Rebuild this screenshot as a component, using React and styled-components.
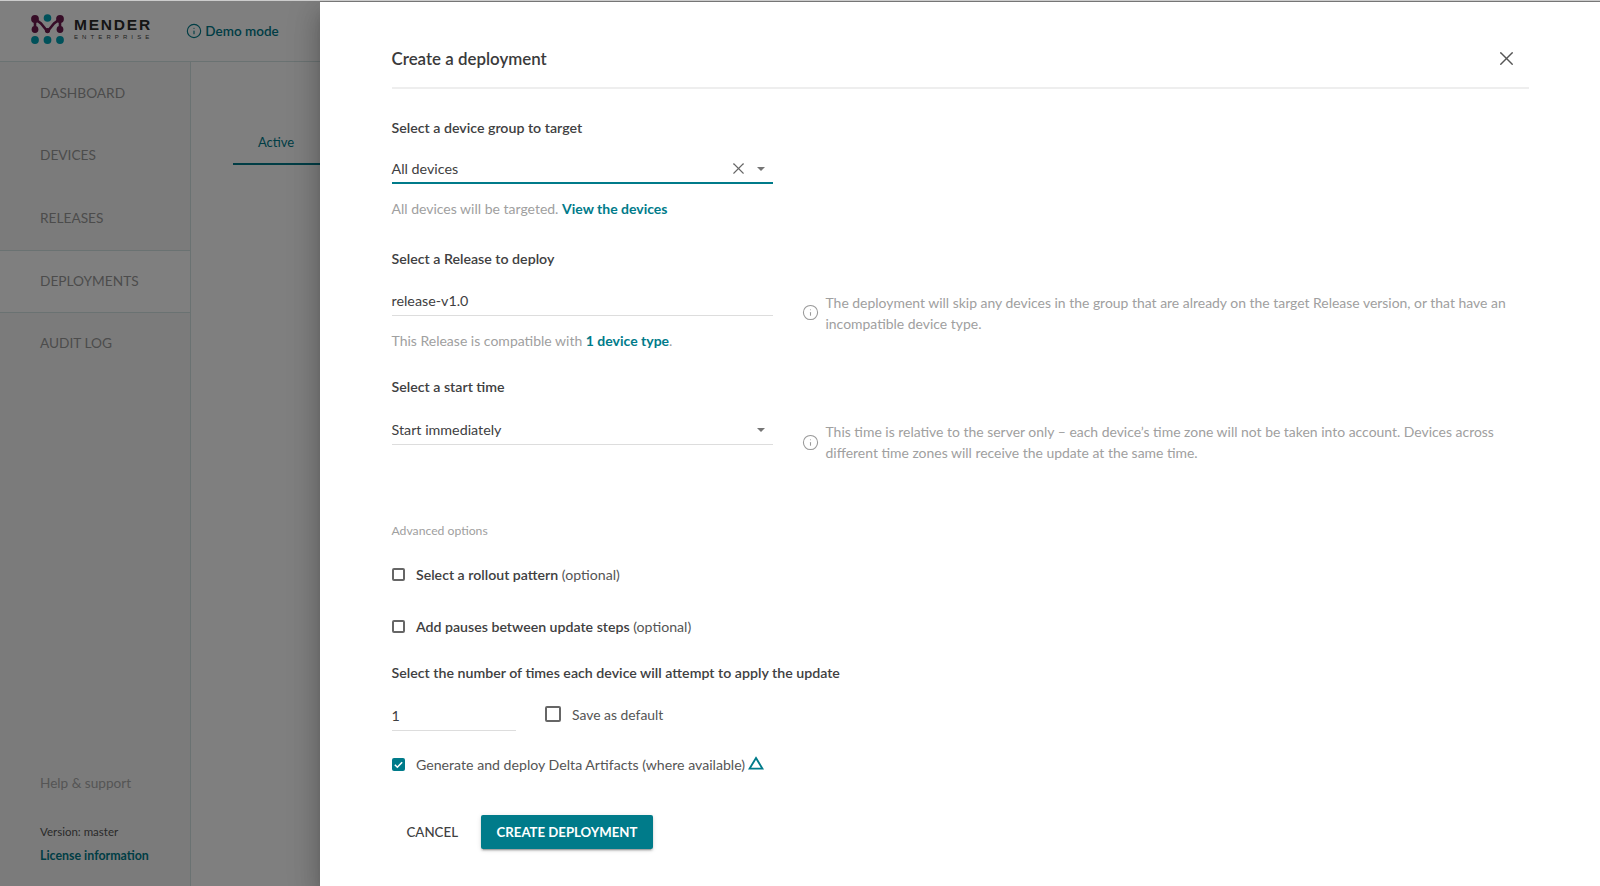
import React from 'react';
import styled, { createGlobalStyle } from 'styled-components';
import { X, Info } from 'lucide-react';

const teal = '#007b8a';

const GlobalStyle = createGlobalStyle`
  html, body {
    margin: 0;
    padding: 0;
    background: #fff;
    font-family: 'Lato', 'Liberation Sans', sans-serif;
    color: #404041;
  }
  * { box-sizing: border-box; }
`;

const Page = styled.div`
  position: relative;
  width: 1600px;
  height: 886px;
  overflow: hidden;
  display: flex;
  flex-direction: column;
  border-top: 1px solid #ccc;
`;

const Header = styled.header`
  height: 61px;
  display: flex;
  align-items: center;
  padding-left: 31px;
  border-bottom: 1px solid #d4e4e4;
  flex: none;
`;

const Logo = styled.div`
  display: flex;
  align-items: center;
  gap: 10px;
  margin: 0 33px 4px 0;
`;

const LogoWords = styled.div`
  display: flex;
  flex-direction: column;
`;

const LogoName = styled.span`
  font-family: 'Liberation Sans', sans-serif;
  font-size: 15.5px;
  font-weight: 700;
  letter-spacing: 1.8px;
  line-height: 16px;
  color: #2b2b2b;
`;

const LogoSub = styled.span`
  font-family: 'Liberation Sans', sans-serif;
  font-size: 6px;
  letter-spacing: 4.1px;
  line-height: 8px;
  color: #444;
`;

const DemoMode = styled.div`
  display: flex;
  align-items: center;
  gap: 3px;
  color: ${teal};
  font-size: 13.5px;
  font-weight: 600;
`;

const Body = styled.div`
  flex: 1;
  display: flex;
`;

const Sidebar = styled.nav`
  width: 191px;
  background: #f7f7f7;
  border-right: 1px solid #d4e4e4;
  display: flex;
  flex-direction: column;
  padding-bottom: 23px;
`;

const NavItem = styled.div`
  height: 62.67px;
  display: flex;
  align-items: center;
  padding: 0 0 ${(props) => (props.$active ? 1 : 2)}px 40px;
  font-size: 13.7px;
  color: #999;
  ${(props) => props.$active && 'border-top: 1px solid #d4e4e4; border-bottom: 1px solid #d4e4e4; background: #fff;'}
`;

const SideFooter = styled.div`
  margin-top: auto;
  padding-left: 40px;
  display: flex;
  flex-direction: column;
`;

const HelpLink = styled.div`
  font-size: 13.6px;
  color: #aaa;
  margin-bottom: 34px;
`;

const Version = styled.div`
  font-size: 11.5px;
  color: #555;
  margin-bottom: 10px;
`;

const License = styled.div`
  font-size: 12.4px;
  font-weight: 700;
  color: ${teal};
`;

const Main = styled.main`
  flex: 1;
  padding: 58px 0 0 42px;
`;

const Tab = styled.div`
  width: 100px;
  height: 45px;
  padding-top: 14px;
  padding-right: 14px;
  text-align: center;
  font-size: 13px;
  color: ${teal};
  border-bottom: 2px solid ${teal};
`;

const Backdrop = styled.div`
  position: absolute;
  inset: 0;
  background: rgba(0, 0, 0, 0.5);
`;

const Drawer = styled.aside`
  position: absolute;
  top: 1px;
  right: 0;
  bottom: 0;
  width: 1280px;
  background: #fff;
  padding: 0 71px 0 71.5px;
  box-shadow: 0 8px 10px -5px rgba(0, 0, 0, 0.2), 0 16px 24px 2px rgba(0, 0, 0, 0.14), 0 6px 30px 5px rgba(0, 0, 0, 0.12);
`;

const DrawerHead = styled.div`
  height: 87px;
  display: flex;
  align-items: center;
  justify-content: space-between;
  border-bottom: 2px solid #eee;
  padding: 27px 11.5px 0 0;
  margin-bottom: 29px;
`;

const Title = styled.h2`
  margin: 0;
  font-size: 16.9px;
  font-weight: 600;
  color: #3a3a3b;
`;

const FieldLabel = styled.div`
  font-size: 14.2px;
  font-weight: 600;
  line-height: 20px;
  color: #404041;
  margin-top: ${(props) => props.$top || 0}px;
  margin-bottom: ${(props) => props.$gap || 19}px;
`;

const FieldRow = styled.div`
  display: flex;
  align-items: flex-start;
  gap: 30px;
`;

const FieldCol = styled.div`
  width: 381px;
  flex: none;
`;

const Input = styled.div`
  width: ${(props) => props.$width || 381}px;
  height: ${(props) => (props.$focus ? 27 : 28)}px;
  flex: none;
  display: flex;
  align-items: center;
  justify-content: space-between;
  padding-bottom: 2px;
  font-size: 14.3px;
  color: #404041;
  border-bottom: ${(props) => (props.$focus ? `2px solid ${teal}` : '1px solid #ddd')};
`;

const InputIcons = styled.div`
  display: flex;
  align-items: center;
  gap: 9px;
  padding-right: 8px;
`;

const Caret = styled.span`
  width: 0;
  height: 0;
  border-left: 4.5px solid transparent;
  border-right: 4.5px solid transparent;
  border-top: 4.5px solid #757575;
  display: block;
`;

const Helper = styled.div`
  font-size: 14px;
  line-height: 20px;
  color: #a0a0a0;
  margin-top: 15px;
`;

const TealLink = styled.a`
  color: ${teal};
  font-weight: 700;
`;

const Note = styled.div`
  flex: 1;
  display: flex;
  align-items: center;
  gap: 7px;
  margin: ${(props) => props.$top || 0}px 0 0 -1px;
  font-size: 13.95px;
  line-height: 21px;
  color: #a0a0a0;
  svg {
    flex: none;
  }
`;

const Advanced = styled.div`
  font-size: 12.2px;
  line-height: 16px;
  color: #a0a0a0;
  margin: 60px 0 25px;
`;

const CheckRow = styled.label`
  display: flex;
  align-items: center;
  gap: 11px;
  height: 20px;
  font-size: ${(props) => (props.$small ? 13.9 : 14.15)}px;
  color: #555;
  margin-top: ${(props) => props.$top || 0}px;
  margin-bottom: ${(props) => props.$gap || 0}px;
`;

const Box = styled.span`
  width: ${(props) => props.$size || 13}px;
  height: ${(props) => props.$size || 13}px;
  border: 2px solid #666;
  border-radius: 2px;
  flex: none;
  margin-right: 0.5px;
`;

const CheckedBox = styled.span`
  width: 13px;
  height: 13px;
  margin-right: 0.5px;
  background: ${teal};
  border-radius: 2px;
  flex: none;
  display: flex;
  align-items: center;
  justify-content: center;
`;

const Strong = styled.span`
  font-weight: 600;
  color: #404041;
`;

const AttemptsRow = styled.div`
  display: flex;
  align-items: flex-start;
  gap: 29px;
  margin-bottom: 23.5px;
`;

const DeltaMark = styled.svg`
  margin: -3px 0 0 -8px;
`;

const Actions = styled.div`
  display: flex;
  align-items: center;
  gap: 8px;
  margin-top: 40px;
`;

const CancelButton = styled.button`
  height: 34px;
  width: 81.5px;
  border: none;
  background: none;
  padding: 0;
  font: 500 13.3px 'Lato', sans-serif;
  color: #404041;
`;

const PrimaryButton = styled.button`
  height: 34px;
  width: 172px;
  padding: 0;
  border: none;
  border-radius: 2px;
  background: ${teal};
  color: #fff;
  font: 700 13.2px 'Lato', sans-serif;
  box-shadow: 0 3px 1px -2px rgba(0, 0, 0, 0.2), 0 2px 2px rgba(0, 0, 0, 0.14), 0 1px 5px rgba(0, 0, 0, 0.12);
`;

const MenderLogo = () => (
  <svg width="33" height="30" viewBox="0 0 33 30">
    <g stroke="#6e1a4f" strokeWidth="2.6" fill="none">
      <path d="M4 5 L10 9.5 L16.5 17.5 L23 9.5 L29 5" />
      <path d="M4 5 V15 M29 5 V15" />
    </g>
    <g fill="#6e1a4f">
      <circle cx="4" cy="5" r="3.9" />
      <circle cx="29" cy="5" r="3.9" />
      <circle cx="4" cy="15.5" r="3.4" />
      <circle cx="29" cy="15.5" r="3.4" />
      <circle cx="16.5" cy="16.5" r="2.6" />
    </g>
    <g fill="#00a2b5">
      <circle cx="16.5" cy="4" r="3.8" />
      <circle cx="4" cy="26" r="3.9" />
      <circle cx="16.5" cy="26" r="3.9" />
      <circle cx="29" cy="26" r="3.9" />
    </g>
  </svg>
);

const navItems = ['DASHBOARD', 'DEVICES', 'RELEASES', 'DEPLOYMENTS', 'AUDIT LOG'];

const App = () => (
  <Page>
    <GlobalStyle />
    <Header>
      <Logo>
        <MenderLogo />
        <LogoWords>
          <LogoName>MENDER</LogoName>
          <LogoSub>ENTERPRISE</LogoSub>
        </LogoWords>
      </Logo>
      <DemoMode>
        <Info size={16} strokeWidth={1.7} />
        Demo mode
      </DemoMode>
    </Header>
    <Body>
      <Sidebar>
        {navItems.map((item) => (
          <NavItem key={item} $active={item === 'DEPLOYMENTS'}>
            {item}
          </NavItem>
        ))}
        <SideFooter>
          <HelpLink>Help &amp; support</HelpLink>
          <Version>Version: master</Version>
          <License>License information</License>
        </SideFooter>
      </Sidebar>
      <Main>
        <Tab>Active</Tab>
      </Main>
    </Body>
    <Backdrop />
    <Drawer>
      <DrawerHead>
        <Title>Create a deployment</Title>
        <X size={23} strokeWidth={1.4} color="#555" />
      </DrawerHead>
      <FieldLabel>Select a device group to target</FieldLabel>
      <FieldCol>
        <Input $focus>
          All devices
          <InputIcons>
            <X size={19} strokeWidth={1.4} color="#666" />
            <Caret />
          </InputIcons>
        </Input>
        <Helper>
          All devices will be targeted. <TealLink>View the devices</TealLink>
        </Helper>
      </FieldCol>
      <FieldLabel $top={30}>Select a Release to deploy</FieldLabel>
      <FieldRow>
        <FieldCol>
          <Input>release-v1.0</Input>
          <Helper>
            This Release is compatible with <TealLink>1 device type</TealLink>.
          </Helper>
        </FieldCol>
        <Note $top={3.5}>
          <Info size={17} strokeWidth={1.5} color="#999" />
          <span>
            The deployment will skip any devices in the group that are already on the target Release version, or that have an incompatible device type.
          </span>
        </Note>
      </FieldRow>
      <FieldLabel $top={26} $gap={20}>Select a start time</FieldLabel>
      <FieldRow>
        <FieldCol>
          <Input>
            Start immediately
            <InputIcons>
              <Caret />
            </InputIcons>
          </Input>
        </FieldCol>
        <Note $top={4}>
          <Info size={17} strokeWidth={1.5} color="#999" />
          <span>
            This time is relative to the server only – each device’s time zone will not be taken into account. Devices across different time zones will receive the update at the same time.
          </span>
        </Note>
      </FieldRow>
      <Advanced>Advanced options</Advanced>
      <CheckRow $gap={32}>
        <Box />
        <span>
          <Strong>Select a rollout pattern</Strong> (optional)
        </span>
      </CheckRow>
      <CheckRow $gap={27}>
        <Box />
        <span>
          <Strong>Add pauses between update steps</Strong> (optional)
        </span>
      </CheckRow>
      <FieldLabel $gap={20}>Select the number of times each device will attempt to apply the update</FieldLabel>
      <AttemptsRow>
        <Input $width={124}>1</Input>
        <CheckRow $top={1} $small>
          <Box $size={16} />
          Save as default
        </CheckRow>
      </AttemptsRow>
      <CheckRow>
        <CheckedBox>
          <svg width="11" height="11" viewBox="0 0 24 24">
            <path d="M4 12.5 L9.5 18 L20 7" stroke="#fff" strokeWidth="3.4" fill="none" />
          </svg>
        </CheckedBox>
        <span>Generate and deploy Delta Artifacts (where available)</span>
        <DeltaMark width="16" height="14" viewBox="0 0 16 14">
          <path d="M8 2 L14.4 12.6 H1.6 Z" stroke={teal} strokeWidth="1.9" fill="none" />
        </DeltaMark>
      </CheckRow>
      <Actions>
        <CancelButton>CANCEL</CancelButton>
        <PrimaryButton>CREATE DEPLOYMENT</PrimaryButton>
      </Actions>
    </Drawer>
  </Page>
);

export default App;
